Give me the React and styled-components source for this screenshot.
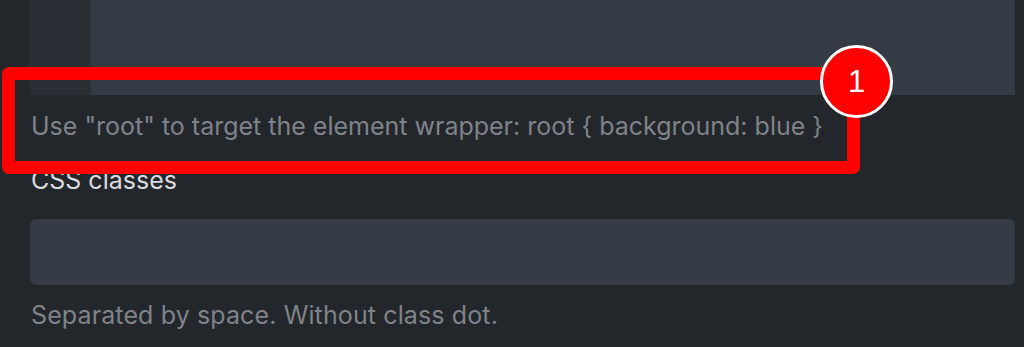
import React from "react";
import styled, { createGlobalStyle } from "styled-components";

const Global = createGlobalStyle`
  html, body { margin: 0; padding: 0; background: #23272c; }
  body { font-family: Inter, "Noto Sans", sans-serif; -webkit-font-smoothing: antialiased; }
`;

const Page = styled.div`
  position: relative;
  width: 1024px;
  height: 347px;
  overflow: hidden;
  background: #23272c;
  box-sizing: border-box;
  padding: 0 9px 0 30px;
  display: flex;
  flex-direction: column;
`;

const Editor = styled.div`
  display: flex;
  height: 95px;
  flex-shrink: 0;
`;

const Gutter = styled.div`
  width: 61px;
  background: #2a2e35;
`;

const Code = styled.div`
  flex: 1;
  background: #353b44;
`;

const Help = styled.p`
  margin: ${(p) => p.$top}px 0 0 1px;
  font-size: 25px;
  line-height: 36px;
  color: #7f8389;
  white-space: nowrap;
  letter-spacing: ${(p) => p.$spacing || 0}px;
`;

const Label = styled.label`
  display: block;
  margin: 18px 0 0 1px;
  font-size: 25px;
  line-height: 36px;
  color: #d9dadd;
`;

const Input = styled.div`
  margin-top: 21px;
  height: 66px;
  border-radius: 6px;
  background: #353b44;
  flex-shrink: 0;
`;

const Highlight = styled.div`
  position: absolute;
  left: 2px;
  top: 67px;
  width: 858px;
  height: 107px;
  box-sizing: border-box;
  border: 13px solid #ff0000;
  border-radius: 7px;
  pointer-events: none;
`;

const Badge = styled.div`
  position: absolute;
  left: 820px;
  top: 45px;
  width: 73px;
  height: 73px;
  box-sizing: border-box;
  border-radius: 50%;
  background: #ff0000;
  border: 3px solid #ffffff;
  color: #ffffff;
  display: flex;
  align-items: center;
  justify-content: center;
  font-family: "Liberation Sans", Arial, sans-serif;
  font-size: 31px;
  line-height: 1;
`;

export default function App() {
  return (
    <>
      <Global />
      <Page>
        <Editor>
          <Gutter />
          <Code />
        </Editor>
        <Help $top={13}>
          Use "root" to target the element wrapper: root {"{"} background: blue {"}"}
        </Help>
        <Label>CSS classes</Label>
        <Input />
        <Help $top={12} $spacing={0.12}>Separated by space. Without class dot.</Help>
        <Highlight />
        <Badge>1</Badge>
      </Page>
    </>
  );
}
